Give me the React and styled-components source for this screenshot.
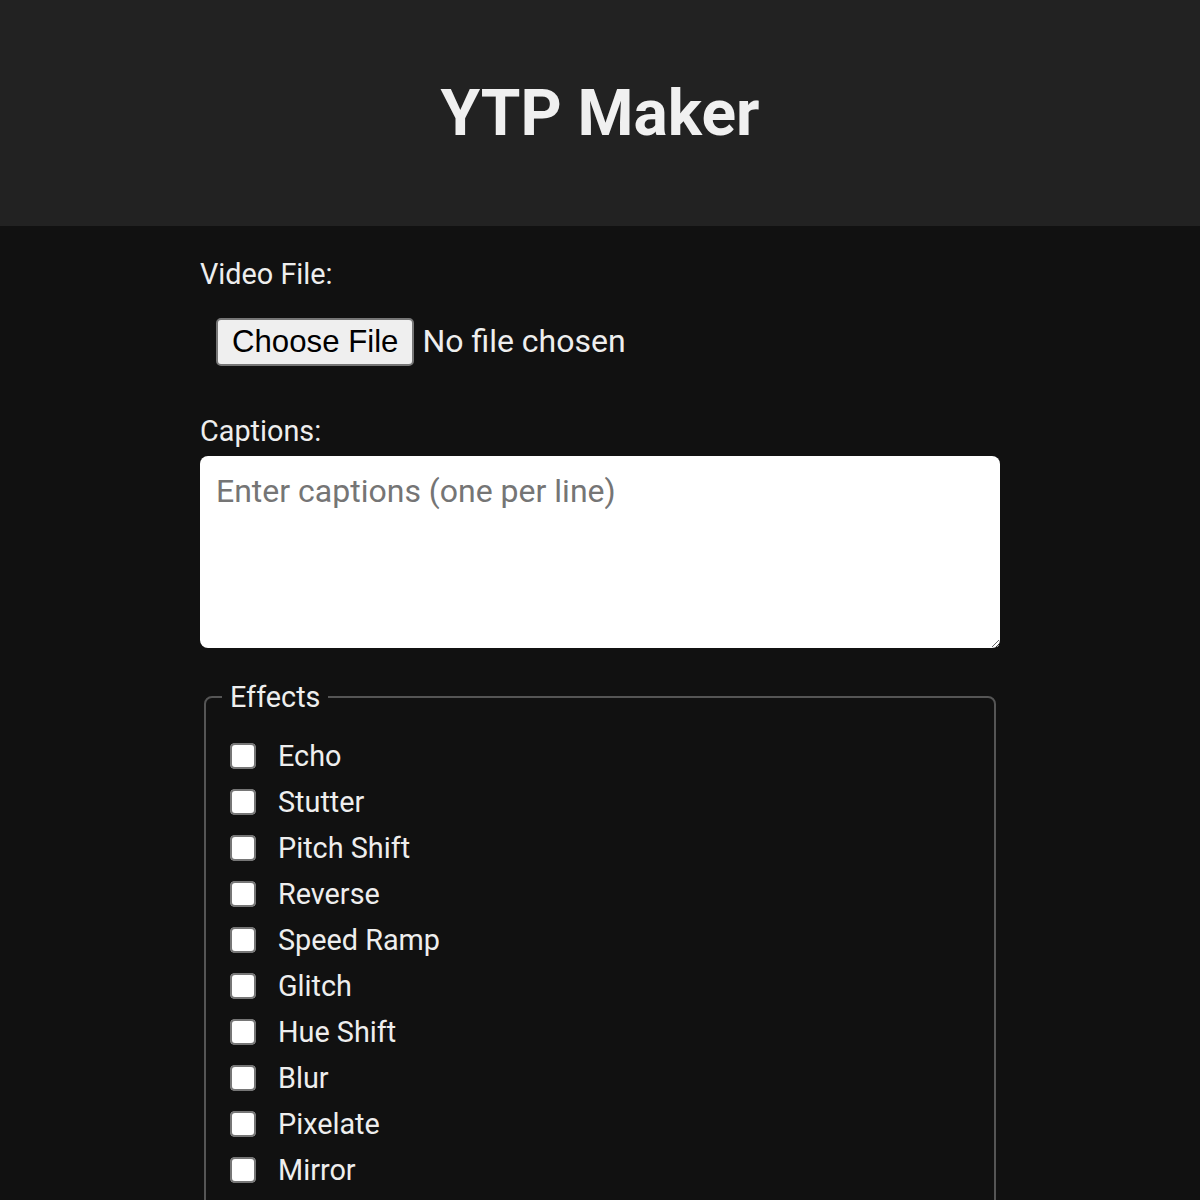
import styled, { createGlobalStyle } from 'styled-components';

const GlobalStyle = createGlobalStyle`
  html, body {
    margin: 0;
    padding: 0;
    background: #111;
  }
  body {
    font-family: Roboto, "Noto Sans", "Liberation Sans", sans-serif;
    color: #eee;
  }
`;

// the whole page is drawn at double size
const Page = styled.div`
  zoom: 2;
  min-height: 600px;
  background: #111;
  color: #eee;
  font-family: Roboto, "Noto Sans", "Liberation Sans", sans-serif;
`;

const Header = styled.header`
  background: #222;
  padding: 16.5px 1rem 16px;
  text-align: center;

  h1 {
    margin: 0.67em 0;
    font-size: 2em;
    font-weight: 700;
    color: #f0f0f0;
  }
`;

const Main = styled.main`
  max-width: 400px;
  margin: 0 auto;
  padding-top: 15.5px;
`;

const FormGroup = styled.div`
  margin-bottom: 16px;
`;

const Label = styled.label`
  display: block;
  margin-bottom: ${(p) => p.$gap || '5px'};
  font-size: 0.9rem;
`;

const FileInput = styled.input`
  padding: 8px;
  font-family: inherit;
  font-size: 1rem;
  color: #eee;
  background: transparent;
  border: none;

  &::file-selector-button {
    font-size: 15.6px;
    margin-right: 4px;
  }
`;

const Captions = styled.textarea`
  display: block;
  box-sizing: border-box;
  width: 100%;
  height: 96px;
  padding: 8px;
  border: none;
  border-radius: 4px;
  font-family: inherit;
  font-size: 1rem;
  color: #111;
  background: #fff;

  &::placeholder {
    color: #757575;
  }
`;

const Effects = styled.fieldset`
  margin: 0 2px;
  padding: 11.5px 8px 10px;
  border: 1px solid #555;
  border-radius: 4px;

  legend {
    padding: 0 4px;
    font-size: 0.9rem;
  }
`;

const EffectRow = styled.label`
  display: flex;
  align-items: center;
  margin-bottom: 4px;
  font-size: 0.9rem;

  input {
    margin: 3px 11px 3px 4px;
  }
`;

const effects = [
  'Echo',
  'Stutter',
  'Pitch Shift',
  'Reverse',
  'Speed Ramp',
  'Glitch',
  'Hue Shift',
  'Blur',
  'Pixelate',
  'Mirror',
];

const App = () => {
  return (
    <Page>
      <GlobalStyle />
      <Header>
        <h1>YTP Maker</h1>
      </Header>
      <Main>
        <FormGroup>
          <Label htmlFor="video" $gap="5.5px">
            Video File:
          </Label>
          <FileInput id="video" type="file" accept="video/*" />
        </FormGroup>
        <FormGroup>
          <Label htmlFor="captions" $gap="4px">
            Captions:
          </Label>
          <Captions id="captions" placeholder="Enter captions (one per line)" />
        </FormGroup>
        <Effects>
          <legend>Effects</legend>
          {effects.map((name) => (
            <EffectRow key={name}>
              <input type="checkbox" />
              {name}
            </EffectRow>
          ))}
        </Effects>
      </Main>
    </Page>
  );
};

export default App;
